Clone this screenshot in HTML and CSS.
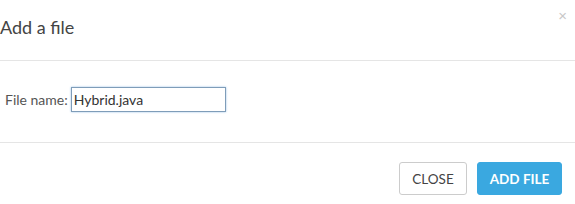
FILE: index.html
```html
<!DOCTYPE html>
<html lang="en">

<head>
    <meta charset="UTF-8">
    <meta name="viewport" content="width=device-width, initial-scale=1.0">
    <title>Add a file</title>
    <link rel="stylesheet" href="styles.css">
</head>

<body>
    <div class="modal">
        <div class="modal-header">
            <h4 class="modal-title">Add a file</h4>
            <button type="button" class="close">&times;</button>
        </div>
        <div class="modal-body">
            <label for="fileName">File name:</label>
            <input type="text" id="fileName" value="Hybrid.java">
        </div>
        <div class="modal-footer">
            <button type="button" class="btn btn-default">CLOSE</button>
            <button type="button" class="btn btn-primary">ADD FILE</button>
        </div>
    </div>
</body>

</html>
```

FILE: styles.css
```css
* {
    margin: 0;
    padding: 0;
    box-sizing: border-box;
    font-family: Lato, "Open Sans", sans-serif;
}

body {
    background: #fff;
    width: 575px;
    height: 204px;
    overflow: hidden;
}

.modal-header {
    height: 61px;
    border-bottom: 1px solid #e5e5e5;
    display: flex;
    justify-content: space-between;
    align-items: flex-start;
    padding: 0 8px 0 0;
}

.modal-title {
    font-size: 18px;
    font-weight: normal;
    color: #444;
    margin-top: 16px;
}

.close {
    background: none;
    border: 0;
    color: #c8c8c8;
    font-size: 15px;
    line-height: 1;
    margin-top: 8px;
    font-family: Arial, sans-serif;
}

.modal-body {
    height: 82px;
    border-bottom: 1px solid #e5e5e5;
    display: flex;
    align-items: center;
    padding: 0 0 5px 5px;
}

.modal-body label {
    font-size: 14px;
    color: #555;
    margin-right: 3px;
}

.modal-body input {
    width: 155px;
    height: 25px;
    border: 1px solid #7f9db9;
    box-shadow: 0 0 2px #9cc2e6;
    font-size: 14px;
    color: #333;
    padding: 0 2px;
    outline: none;
}

.modal-footer {
    display: flex;
    justify-content: flex-end;
    gap: 10px;
    padding: 19px 13px 0 0;
}

.btn {
    height: 33px;
    font-size: 13.5px;
    border-radius: 3px;
    padding: 0 8px;
}

.btn-default {
    width: 68px;
    background: #fff;
    color: #444;
    border: 1px solid #ccc;
}

.btn-primary {
    width: 85px;
    background: #3aa8e0;
    color: #fff;
    border: 1px solid #3aa8e0;
    font-weight: bold;
}
```
